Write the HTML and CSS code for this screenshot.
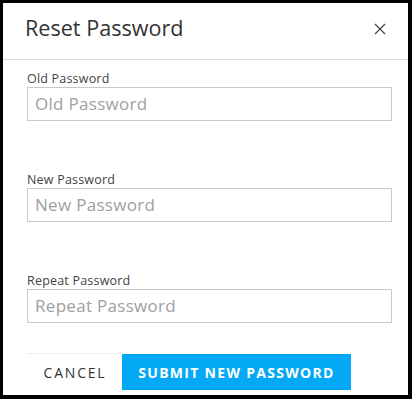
FILE: index.html
```html
<!DOCTYPE html>
<html>
<head>
<meta charset="utf-8">
<link rel="stylesheet" href="styles.css">
</head>
<body>
<div class="dialog">
  <div class="header">
    <h1 class="title">Reset Password</h1>
    <button class="close" aria-label="Close">
      <svg width="12" height="12" viewBox="0 0 12 12"><path d="M1 1 L11 11 M11 1 L1 11" stroke="#444" stroke-width="1.2" fill="none"/></svg>
    </button>
  </div>
  <div class="body">
    <div class="field">
      <label class="label">Old Password</label>
      <input class="input" type="password" placeholder="Old Password">
    </div>
    <div class="field">
      <label class="label">New Password</label>
      <input class="input" type="password" placeholder="New Password">
    </div>
    <div class="field">
      <label class="label">Repeat Password</label>
      <input class="input" type="password" placeholder="Repeat Password">
    </div>
  </div>
  <div class="footer">
    <button class="cancel">CANCEL</button>
    <button class="submit">SUBMIT NEW PASSWORD</button>
  </div>
</div>
</body>
</html>
```
FILE: styles.css
```css
html, body {
  margin: 0;
  padding: 0;
  background: #fff;
}
body {
  font-family: "Open Sans", "Liberation Sans", sans-serif;
  color: #333;
}
.dialog {
  box-sizing: border-box;
  width: 412px;
  height: 399px;
  border-style: solid;
  border-color: #000;
  border-width: 3px 4px 4px 3px;
  background: #fff;
  display: flex;
  flex-direction: column;
}
.header {
  height: 56px;
  border-bottom: 1px solid #dcdcdc;
  display: flex;
  align-items: center;
  justify-content: space-between;
  padding: 0 22px 0 22px;
}
.title {
  margin: 0;
  font-size: 21.6px;
  font-weight: 400;
  color: #333;
  line-height: 28px;
  padding-bottom: 6px;
}
.close {
  border: 0;
  background: none;
  padding: 0;
  width: 12px;
  height: 12px;
  display: flex;
  margin-bottom: 5px;
}
.body {
  padding: 11px 16px 0 24px;
}
.field {
  display: flex;
  flex-direction: column;
  margin-bottom: 51px;
}
.field:last-child {
  margin-bottom: 30px;
}
.label {
  font-size: 12.5px;
  letter-spacing: 0.2px;
  line-height: 16px;
  color: #444;
}
.input {
  box-sizing: border-box;
  height: 34px;
  width: 365px;
  border: 1px solid #c8c8c8;
  padding: 0 7px 1px 7px;
  font-family: "Open Sans", "Liberation Sans", sans-serif;
  font-size: 17px;
  letter-spacing: 0.3px;
  color: #333;
  outline: none;
}
.input::placeholder {
  color: #a0a0a0;
}
.footer {
  display: flex;
  align-items: flex-end;
  padding: 0 0 0 24px;
}
.cancel {
  box-sizing: border-box;
  height: 37px;
  width: 95px;
  border: 0;
  border-top: 1px solid #eeeeee;
  background: #fff;
  font-family: "Open Sans", "Liberation Sans", sans-serif;
  font-size: 14px;
  letter-spacing: 1.8px;
  color: #333;
  padding: 0 0 0 1px;
}
.submit {
  box-sizing: border-box;
  height: 36px;
  width: 229px;
  border: 0;
  background: #03a9f4;
  color: #fff;
  font-family: "Open Sans", "Liberation Sans", sans-serif;
  font-size: 14px;
  font-weight: 700;
  letter-spacing: 1.3px;
  padding: 0;
}
```
